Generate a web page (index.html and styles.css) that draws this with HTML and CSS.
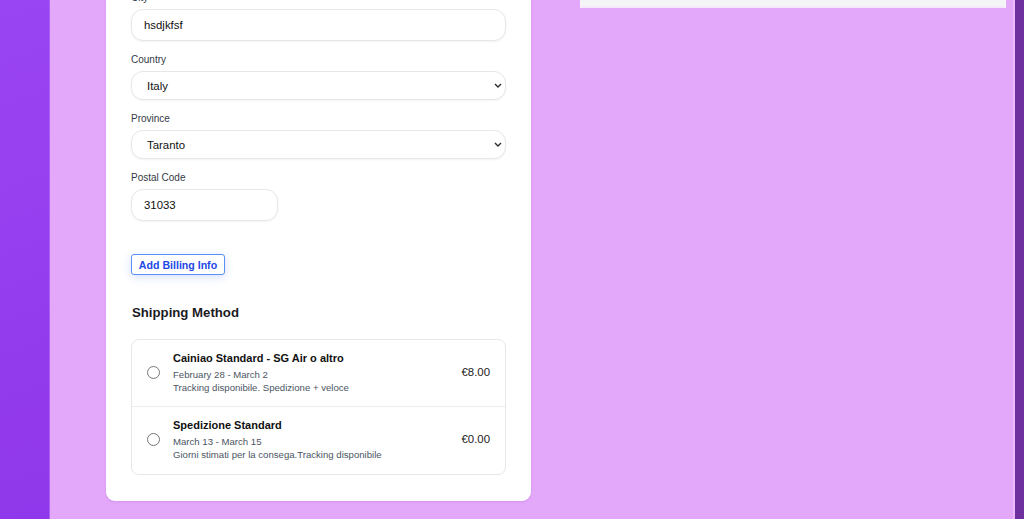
FILE: index.html
```html
<!DOCTYPE html>
<html lang="en">
<head>
<meta charset="utf-8">
<title>Checkout</title>
<link rel="stylesheet" href="styles.css">
</head>
<body>
<div class="side-left"></div>
<main class="main">
  <div class="columns">
    <section class="card">
      <div class="field">
        <label class="label">City</label>
        <input class="input" type="text" value="hsdjkfsf">
      </div>
      <div class="field">
        <label class="label">Country</label>
        <div class="select-wrap">
          <select class="select"><option>Italy</option></select>
          <svg class="chevron" width="8" height="5" viewBox="0 0 8 5"><path d="M1 1 L4 4 L7 1" fill="none" stroke="#2b2b2b" stroke-width="1.4"/></svg>
        </div>
      </div>
      <div class="field">
        <label class="label">Province</label>
        <div class="select-wrap">
          <select class="select"><option>Taranto</option></select>
          <svg class="chevron" width="8" height="5" viewBox="0 0 8 5"><path d="M1 1 L4 4 L7 1" fill="none" stroke="#2b2b2b" stroke-width="1.4"/></svg>
        </div>
      </div>
      <div class="field field-last">
        <label class="label">Postal Code</label>
        <input class="input input-short" type="text" value="31033">
      </div>
      <button class="btn-billing" type="button">Add Billing Info</button>
      <h2 class="section-title">Shipping Method</h2>
      <div class="ship-list">
        <label class="ship-row">
          <input class="radio" type="radio" name="ship">
          <div class="ship-info">
            <div class="ship-name">Cainiao Standard - SG Air o altro</div>
            <div class="ship-date">February 28 - March 2</div>
            <div class="ship-desc">Tracking disponibile. Spedizione + veloce</div>
          </div>
          <div class="ship-price">€8.00</div>
        </label>
        <label class="ship-row">
          <input class="radio" type="radio" name="ship">
          <div class="ship-info">
            <div class="ship-name">Spedizione Standard</div>
            <div class="ship-date">March 13 - March 15</div>
            <div class="ship-desc">Giorni stimati per la consega.Tracking disponibile</div>
          </div>
          <div class="ship-price">€0.00</div>
        </label>
      </div>
    </section>
    <aside class="summary"></aside>
  </div>
</main>
<div class="side-right"></div>
</body>
</html>
```
FILE: styles.css
```css
* { box-sizing: border-box; }
html, body { margin: 0; padding: 0; height: 100%; }
body {
  display: flex;
  height: 519px;
  overflow: hidden;
  font-family: "Liberation Sans", Arial, sans-serif;
  color: #111;
}
.side-left {
  width: 49px;
  flex: none;
  background: linear-gradient(160deg, #9a45f3, #8f37ea);
}
.side-right {
  width: 9px;
  flex: none;
  background: #6e2f9f;
}
.main {
  flex: 1;
  background: #e4a8fb;
  border-left: 1px solid #ac60f6;
  border-right: 2px solid #ebb9fc;
  overflow: hidden;
}
.columns {
  display: grid;
  grid-template-columns: 425px 426px;
  column-gap: 49px;
  align-items: start;
  padding-left: 56px;
  margin-top: -34px;
}
.card {
  background: #fff;
  border-radius: 0 0 9px 9px;
  padding: 25px 25px 26px 25px;
  box-shadow: 0 1px 3px rgba(80, 20, 120, 0.12);
}
.summary {
  height: 42px;
  background: #f3f4f6;
  border: 1px solid #fbf4fe;
  border-bottom: 2px solid #f6e9fd;
}
.field { margin-bottom: 12px; }
.field-last { margin-bottom: 0; }
.label {
  display: block;
  font-size: 10px;
  line-height: 13px;
  color: #333a44;
  margin-bottom: 5px;
}
.input {
  display: block;
  width: 100%;
  height: 32px;
  border: 1px solid #e6e7ea;
  border-radius: 12px;
  padding: 0 12px;
  font-family: inherit;
  font-size: 11.4px;
  color: #111;
  background: #fff;
  box-shadow: 0 1px 2px rgba(0, 0, 0, 0.05);
  outline: none;
}
.input-short { width: 147px; }
.select-wrap { position: relative; }
.select {
  display: block;
  width: 100%;
  height: 29px;
  -webkit-appearance: none;
  appearance: none;
  border: 1px solid #e6e7ea;
  border-radius: 12px;
  padding: 0 20px 0 15px;
  font-family: inherit;
  font-size: 11.4px;
  color: #111;
  background: #fff;
  box-shadow: 0 1px 2px rgba(0, 0, 0, 0.05);
  outline: none;
}
.chevron {
  position: absolute;
  right: 4px;
  top: 12px;
  pointer-events: none;
}
.btn-billing {
  display: block;
  margin-top: 33px;
  height: 21px;
  width: 94px;
  padding: 0;
  background: #fff;
  border: 1px solid #5b8ff3;
  border-radius: 3px;
  color: #2148e6;
  font-family: inherit;
  font-weight: bold;
  font-size: 10.6px;
  box-shadow: 0 2px 8px rgba(59, 110, 246, 0.22);
}
.section-title {
  margin: 30px 0 18px;
  padding-left: 1px;
  font-size: 13.2px;
  line-height: 16px;
  font-weight: bold;
  color: #1b1b1f;
}
.ship-list {
  border: 1px solid #e6e7ea;
  border-radius: 8px;
}
.ship-row {
  display: flex;
  align-items: center;
  gap: 13px;
  padding: 11px 15px 12px 15px;
}
.ship-row + .ship-row {
  border-top: 1px solid #ebecee;
  padding-bottom: 13px;
}
.radio {
  width: 13px;
  height: 13px;
  margin: 0;
  flex: none;
}
.ship-info { flex: 1; }
.ship-name {
  font-size: 11px;
  line-height: 15px;
  font-weight: bold;
  color: #111;
}
.ship-date {
  margin-top: 2px;
  font-size: 9.6px;
  line-height: 13px;
  color: #4b5563;
}
.ship-desc {
  font-size: 9.6px;
  line-height: 13px;
  color: #4b5563;
}
.ship-price {
  font-size: 11.4px;
  color: #222;
  margin-bottom: 2px;
}
```
